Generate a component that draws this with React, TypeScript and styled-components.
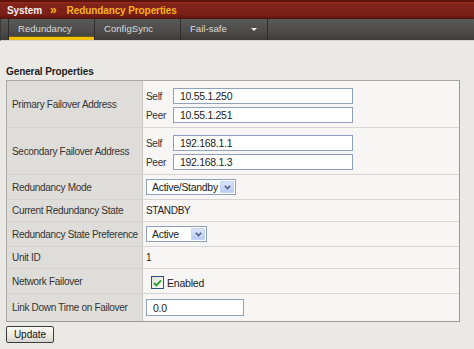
import React from "react";
import styled, { createGlobalStyle } from "styled-components";

const GlobalStyle = createGlobalStyle`
  html, body {
    margin: 0;
    padding: 0;
    background: #ebe9e5;
  }
  body {
    width: 474px;
    height: 349px;
    overflow: hidden;
    font-family: "Liberation Sans", Arial, sans-serif;
  }
`;

const Page = styled.div`
  width: 474px;
  height: 349px;
  background: #ebe9e5;
`;

const TitleBar = styled.div`
  height: 19px;
  box-sizing: border-box;
  display: flex;
  align-items: center;
  padding: 1px 0 0 7px;
  background: linear-gradient(#5c140c 0, #5c140c 2px, #9a2a1c 2px, #82231a 4px, #7a1f17 15px, #561209 19px);
  font-size: 10px;
  font-weight: bold;
  letter-spacing: -0.1px;
`;

const Crumb = styled.span<{ $active?: boolean }>`
  color: ${(p) => (p.$active ? "#f5b317" : "#f4eeee")};
`;

const CrumbSep = styled.span`
  color: #f5b317;
  font-size: 12px;
  margin: -1px 10px 0 8px;
`;

const TabBar = styled.div`
  height: 21px;
  display: flex;
  background: linear-gradient(#5a5957, #4c4b49 60%, #3e3d3b);
  border-bottom: 1px solid #d8d6d2;
  padding-left: 7px;
  border-left: 1px solid #3a3937;
`;

const Tab = styled.div<{ $w: number; $active?: boolean }>`
  position: relative;
  width: ${(p) => p.$w}px;
  box-sizing: border-box;
  display: flex;
  align-items: center;
  padding: 0 0 2px 9px;
  font-size: 9.6px;
  color: #d9d9d7;
  border-left: 1px solid #2e2d2b;
  border-right: 1px solid #2e2d2b;
  margin-right: -1px;
  ${(p) => (p.$active ? "box-shadow: inset 0 -3px 0 #f2c200, inset 0 -4px 0 #6a5a20;" : "")}
`;

const TabArrow = styled.span`
  position: absolute;
  right: 10px;
  top: 9px;
  width: 0;
  height: 0;
  border-left: 3px solid transparent;
  border-right: 3px solid transparent;
  border-top: 3px solid #f0f0f0;
`;

const Content = styled.div`
  padding: 25px 14px 0 6px;
`;

const SectionTitle = styled.div`
  font-size: 10px;
  font-weight: bold;
  color: #1e1e1e;
  margin: 0 0 3px 0;
  letter-spacing: -0.1px;
`;

const Table = styled.div`
  width: 454px;
  box-sizing: border-box;
  border: 1px solid #aaa8a4;
  border-right-color: #9c9a96;
  border-bottom-color: #9c9a96;
  display: flex;
  flex-direction: column;
`;

const Row = styled.div<{ $h: number; $last?: boolean }>`
  height: ${(p) => p.$h}px;
  box-sizing: border-box;
  display: grid;
  grid-template-columns: 136px 1fr;
  border-bottom: ${(p) => (p.$last ? "none" : "1px solid #d7d5d1")};
`;

const Label = styled.div`
  background: #dfddd9;
  border-right: 1px solid #c6c4c0;
  display: flex;
  align-items: center;
  padding-left: 5px;
  font-size: 10px;
  letter-spacing: -0.3px;
  color: #333;
`;

const Value = styled.div<{ $pad?: number }>`
  background: #f7f6f4;
  display: flex;
  align-items: center;
  padding-left: ${(p) => p.$pad ?? 3}px;
  font-size: 10px;
  letter-spacing: -0.3px;
  color: #222;
`;

const PairStack = styled.div`
  display: flex;
  flex-direction: column;
  gap: 3px;
  padding-top: 2px;
`;

const Pair = styled.div`
  display: flex;
  align-items: baseline;
`;

const PairLabel = styled.span`
  width: 27px;
  font-size: 10px;
  letter-spacing: -0.3px;
  color: #333;
`;

const TextBox = styled.div<{ $w: number; $h?: number }>`
  width: ${(p) => p.$w}px;
  height: ${(p) => p.$h ?? 16}px;
  box-sizing: border-box;
  border: 1px solid #8ea2bd;
  background: #fff;
  display: flex;
  align-items: center;
  padding-left: 6px;
  font-size: 10.5px;
  letter-spacing: -0.3px;
  color: #222;
`;

const SelectBox = styled.div<{ $w: number }>`
  width: ${(p) => p.$w}px;
  height: 16px;
  box-sizing: border-box;
  border: 1px solid #8ea2bd;
  background: #fff;
  display: flex;
  align-items: center;
  justify-content: space-between;
  padding: 1px 1px 1px 5px;
  font-size: 10.5px;
  letter-spacing: -0.3px;
  color: #222;
`;

const SelectButton = styled.span`
  width: 14px;
  height: 12px;
  border-radius: 1px;
  background: linear-gradient(#dbe5fb, #b8cbf4);
  border: 1px solid #c7d5f5;
  box-sizing: border-box;
  display: flex;
  align-items: center;
  justify-content: center;
`;

const CheckWrap = styled.div`
  display: flex;
  align-items: center;
  gap: 3px;
  padding-left: 5px;
  padding-top: 3px;
  font-size: 10.5px;
  letter-spacing: -0.2px;
  color: #222;
`;

const CheckBox = styled.span`
  width: 13px;
  height: 13px;
  box-sizing: border-box;
  border: 1px solid #29527e;
  background: linear-gradient(135deg, #e0e0da, #fcfcfb);
  display: flex;
  align-items: center;
  justify-content: center;
`;

const Button = styled.button`
  margin-top: 4px;
  width: 48px;
  height: 17px;
  box-sizing: border-box;
  border: 1px solid #3c3c3c;
  border-radius: 2px;
  background: linear-gradient(#fbfbf8, #e6e4dc 70%, #d6d4cc);
  font-family: "Liberation Sans", Arial, sans-serif;
  font-size: 10px;
  color: #111;
  padding: 0;
`;

const Chevron = () => (
  <SelectButton>
    <svg width="7" height="5" viewBox="0 0 7 5">
      <path d="M0.8 0.8 L3.5 3.6 L6.2 0.8" fill="none" stroke="#4d6185" strokeWidth="1.6" />
    </svg>
  </SelectButton>
);

const Select = ({ w, value }: { w: number; value: string }) => (
  <SelectBox $w={w}>
    <span>{value}</span>
    <Chevron />
  </SelectBox>
);

const AddressPair = ({ self, peer }: { self: string; peer: string }) => (
  <PairStack>
    <Pair>
      <PairLabel>Self</PairLabel>
      <TextBox $w={180}>{self}</TextBox>
    </Pair>
    <Pair>
      <PairLabel>Peer</PairLabel>
      <TextBox $w={180}>{peer}</TextBox>
    </Pair>
  </PairStack>
);

const App = () => {
  return (
    <Page>
      <GlobalStyle />
      <TitleBar>
        <Crumb>System</Crumb>
        <CrumbSep>»</CrumbSep>
        <Crumb $active>Redundancy Properties</Crumb>
      </TitleBar>
      <TabBar>
        <Tab $w={87} $active>Redundancy</Tab>
        <Tab $w={87}>ConfigSync</Tab>
        <Tab $w={88}>
          Fail-safe
          <TabArrow />
        </Tab>
      </TabBar>
      <Content>
        <SectionTitle>General Properties</SectionTitle>
        <Table>
          <Row $h={47}>
            <Label>Primary Failover Address</Label>
            <Value>
              <AddressPair self="10.55.1.250" peer="10.55.1.251" />
            </Value>
          </Row>
          <Row $h={47}>
            <Label>Secondary Failover Address</Label>
            <Value>
              <AddressPair self="192.168.1.1" peer="192.168.1.3" />
            </Value>
          </Row>
          <Row $h={25}>
            <Label>Redundancy Mode</Label>
            <Value>
              <Select w={90} value="Active/Standby" />
            </Value>
          </Row>
          <Row $h={22}>
            <Label>Current Redundancy State</Label>
            <Value>STANDBY</Value>
          </Row>
          <Row $h={25}>
            <Label>Redundancy State Preference</Label>
            <Value>
              <Select w={61} value="Active" />
            </Value>
          </Row>
          <Row $h={22}>
            <Label>Unit ID</Label>
            <Value>1</Value>
          </Row>
          <Row $h={25}>
            <Label>Network Failover</Label>
            <Value $pad={3}>
              <CheckWrap>
                <CheckBox>
                  <svg width="9" height="8" viewBox="0 0 9 8">
                    <path d="M1 4 L3.4 6.4 L8 1.4" fill="none" stroke="#21a121" strokeWidth="1.8" />
                  </svg>
                </CheckBox>
                Enabled
              </CheckWrap>
            </Value>
          </Row>
          <Row $h={27} $last>
            <Label>Link Down Time on Failover</Label>
            <Value>
              <TextBox $w={98} $h={17}>0.0</TextBox>
            </Value>
          </Row>
        </Table>
        <Button type="button">Update</Button>
      </Content>
    </Page>
  );
};

export default App;
